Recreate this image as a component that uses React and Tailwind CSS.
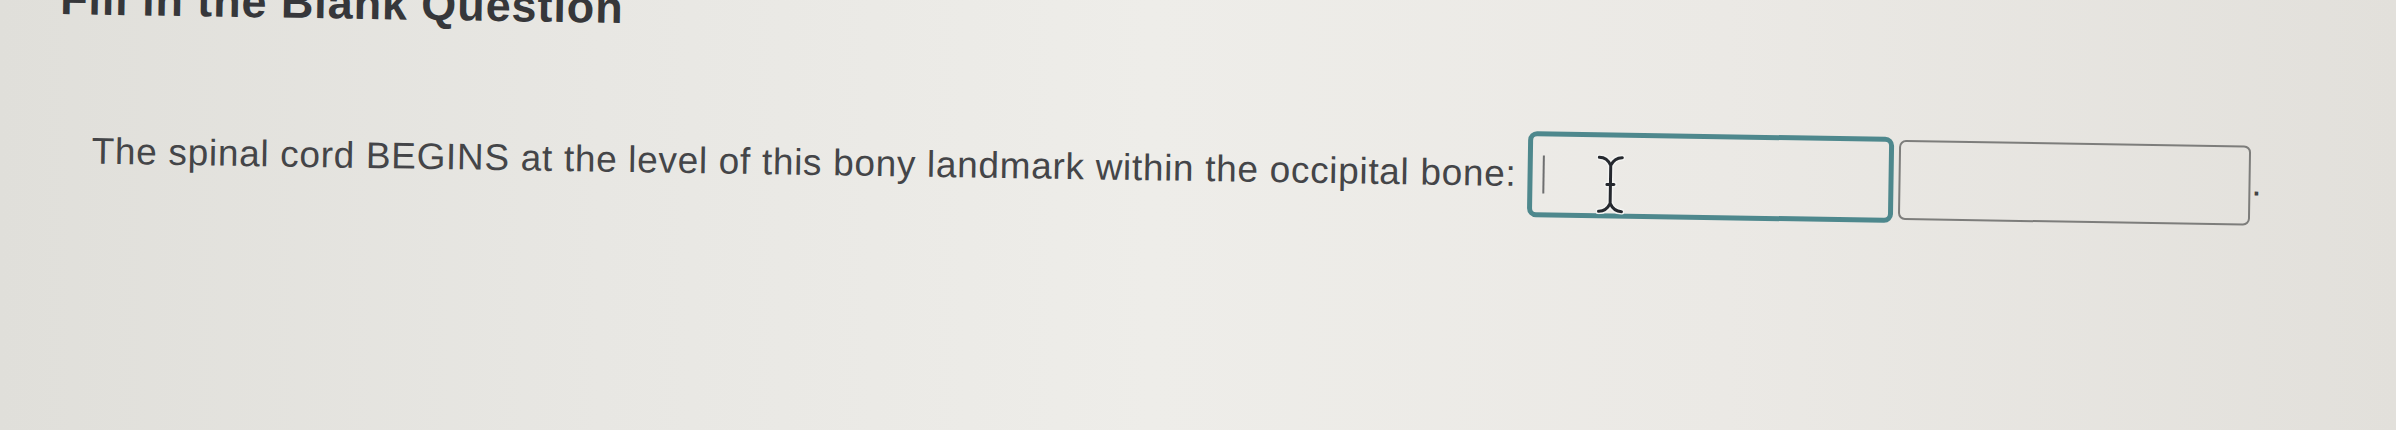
import React from "react";

function IBeam() {
  const d =
    "M2.5 3 C8 3 11.5 5.5 14 11 C16.5 5.5 20 3 25.5 3 M14 11 L14 49 M2.5 57 C8 57 11.5 54.5 14 49 C16.5 54.5 20 57 25.5 57 M10.5 30 L17.5 30";
  return (
    <svg
      width="28"
      height="60"
      viewBox="0 0 28 60"
      className="absolute left-[64px] top-[17px]"
      fill="none"
      strokeLinecap="round"
      strokeLinejoin="round"
    >
      <path d={d} stroke="#f4f4f2" strokeWidth="6" />
      <path d={d} stroke="#25282e" strokeWidth="3" />
    </svg>
  );
}

export default function App() {
  return (
    <div className="h-[430px] w-full overflow-hidden bg-[linear-gradient(90deg,#e0dfda_0%,#e8e7e3_25%,#eeede9_48%,#ebe9e5_72%,#e2e0db_100%)] [font-family:'Liberation_Sans',Arial,sans-serif]">
      <div className="h-[430px] w-full rotate-[0.9deg] origin-center">
        <div className="-mt-[6px] pl-[57px] text-[45px] font-bold leading-none tracking-[0.9px] text-[#36373a]">
          Fill in the Blank Question
        </div>
        <div className="mt-[87px] flex items-center pl-[91px]">
          <span className="text-[37px] tracking-[0.68px] text-[#444548]">
            The spinal cord BEGINS at the level of this bony landmark within the occipital bone:
          </span>
          <div className="relative ml-[11px] flex h-[86px] w-[366px] items-center rounded-[9px] border-[5px] border-[#4e888d] pl-[10px]">
            <div className="h-[38px] w-[2px] bg-[#6e6f70]" />
            <IBeam />
          </div>
          <div className="ml-[5px] h-[80px] w-[352px] rounded-[7px] border-2 border-[#7d7d7b]" />
          <span className="-mt-[6px] ml-[1px] text-[37px] leading-none text-[#444]">.</span>
        </div>
      </div>
    </div>
  );
}
